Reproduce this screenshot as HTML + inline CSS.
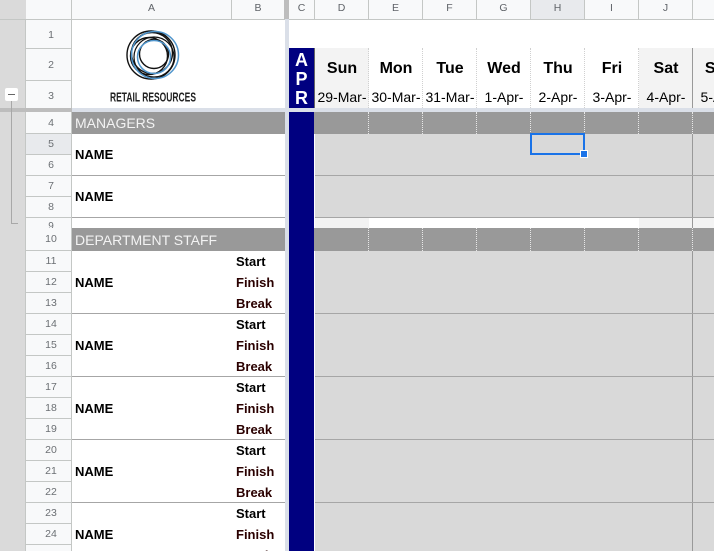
<!DOCTYPE html>
<html><head><meta charset="utf-8">
<style>
html,body{margin:0;padding:0;background:#fff}
#p{position:relative;width:714px;height:551px;overflow:hidden;background:#fff;font-family:"Liberation Sans",Arial,sans-serif}
#p div{position:absolute}
.r{left:26px;width:45px;background:#f8f9fa;border-bottom:1px solid #c4c7c5;text-align:center;font-size:10.5px;color:#6b6f73;box-sizing:border-box;display:flex;align-items:center;justify-content:center;padding-left:5px}
.c{top:0;height:19px;line-height:17px;background:#f8f9fa;border-right:1px solid #c4c7c5;box-sizing:border-box;text-align:center;font-size:10.5px;color:#5f6368}
.n{left:75px;font-size:13px;font-weight:bold;color:#000;line-height:16px}
.s{left:236px;font-size:13px;font-weight:bold;color:#000;line-height:16px}
.f{color:#2a0000}
.l{background:#a6a6a6;height:1px}
.d{width:54px;text-align:center;font-size:16px;font-weight:bold;color:#000;top:60px;line-height:18px}
.t{width:54px;text-align:center;font-size:14px;color:#000;top:88px;line-height:18px;white-space:nowrap;overflow:hidden}
.h{background:#999}
.ht{color:#f3f3f3;font-size:14px;left:75px;line-height:22px}
.g{background:#d9d9d9}
.v{width:0;border-left:1px dotted #d0d0d0}
.w{width:0;border-left:1px dotted #e8e8e8;top:112px;height:22px}
.w2{width:0;border-left:1px dotted #e8e8e8;top:228px;height:23px}
</style></head><body><div id="p">

<!-- grid background -->
<div class="g" style="left:315px;top:134px;width:399px;height:84px"></div>
<div class="g" style="left:315px;top:251px;width:399px;height:300px"></div>

<!-- row 9 strip -->
<div style="left:315px;top:218px;width:54px;height:10px;background:#f3f3f3"></div>
<div style="left:639px;top:218px;width:75px;height:10px;background:#f3f3f3"></div>

<!-- gutter -->
<div style="left:0;top:0;width:25px;height:551px;background:#dadada"></div>
<div style="left:25px;top:0;width:1px;height:551px;background:#c4c7c5"></div>
<div style="left:0;top:0;width:26px;height:19px;background:#dadada"></div>
<div style="left:71px;top:0;width:1px;height:551px;background:#c4c7c5"></div>

<!-- column headers -->
<div class="c" style="left:26px;width:46px"></div>
<div class="c" style="left:72px;width:160px">A</div>
<div class="c" style="left:232px;width:53px">B</div>
<div class="c" style="left:289px;width:26px">C</div>
<div class="c" style="left:315px;width:54px">D</div>
<div class="c" style="left:369px;width:54px">E</div>
<div class="c" style="left:423px;width:54px">F</div>
<div class="c" style="left:477px;width:54px">G</div>
<div class="c" style="left:531px;width:54px;background:#e8eaed">H</div>
<div class="c" style="left:585px;width:54px">I</div>
<div class="c" style="left:639px;width:54px">J</div>
<div class="c" style="left:693px;width:21px;border-right:0"></div>
<div style="left:0;top:19px;width:714px;height:1px;background:#c4c7c5"></div>

<!-- row headers -->
<div class="r" style="top:20px;height:29px;padding-top:2px">1</div>
<div class="r" style="top:49px;height:32px">2</div>
<div class="r" style="top:81px;height:27px;border-bottom:0;padding-top:2px">3</div>
<div class="r" style="top:112px;height:22px">4</div>
<div class="r" style="top:134px;height:21px;background:#e8eaed">5</div>
<div class="r" style="top:155px;height:21px">6</div>
<div class="r" style="top:176px;height:21px">7</div>
<div class="r" style="top:197px;height:21px">8</div>
<div class="r" style="top:218px;height:10px;overflow:hidden;align-items:flex-start;line-height:14px;font-size:10px;border-bottom:0"><span style="margin-top:2px">9</span></div>
<div class="r" style="top:228px;height:23px">10</div>
<div class="r" style="top:251px;height:21px">11</div>
<div class="r" style="top:272px;height:21px">12</div>
<div class="r" style="top:293px;height:21px">13</div>
<div class="r" style="top:314px;height:21px">14</div>
<div class="r" style="top:335px;height:21px">15</div>
<div class="r" style="top:356px;height:21px">16</div>
<div class="r" style="top:377px;height:21px">17</div>
<div class="r" style="top:398px;height:21px">18</div>
<div class="r" style="top:419px;height:21px">19</div>
<div class="r" style="top:440px;height:21px">20</div>
<div class="r" style="top:461px;height:21px">21</div>
<div class="r" style="top:482px;height:21px">22</div>
<div class="r" style="top:503px;height:21px">23</div>
<div class="r" style="top:524px;height:21px">24</div>
<div class="r" style="top:545px;height:6px;border-bottom:0"></div>

<!-- freeze bars -->
<div style="left:0;top:108px;width:72px;height:4px;background:#bdbdbd"></div>
<div style="left:72px;top:108px;width:642px;height:4px;background:#dadfe8"></div>
<div style="left:285px;top:19px;width:4px;height:532px;background:#dadfe8"></div>
<div style="left:284px;top:0;width:5px;height:19px;background:#bdbdbd"></div>

<!-- outline group -->
<div style="left:11px;top:100px;width:1px;height:123px;background:#a8a8a8"></div>
<div style="left:11px;top:223px;width:7px;height:1px;background:#a8a8a8"></div>
<div style="left:5px;top:88px;width:13px;height:13px;background:#fff;border-radius:2px"></div>
<div style="left:8px;top:94px;width:7px;height:1px;background:#666"></div>

<!-- logo -->
<svg style="position:absolute;left:110px;top:24px" width="86" height="84" viewBox="0 0 86 84">
<g fill="none">
<circle cx="41" cy="31" r="24" stroke="#111" stroke-width="1.4"/>
<circle cx="42" cy="29" r="20.5" stroke="#111" stroke-width="1.4"/>
<circle cx="39" cy="32" r="18.5" stroke="#111" stroke-width="1.4"/>
<circle cx="44" cy="33" r="20" stroke="#111" stroke-width="1.2"/>
<circle cx="44" cy="30" r="14.5" stroke="#111" stroke-width="1.4"/>
<circle cx="45" cy="31" r="23.5" stroke="#4f95cc" stroke-width="1.5"/>
<circle cx="44" cy="33" r="16.5" stroke="#4f95cc" stroke-width="1.5"/>
</g>
<text x="0" y="77.5" font-family="Liberation Sans Narrow,Liberation Sans,sans-serif" font-size="13" font-weight="bold" fill="#222" textLength="86" lengthAdjust="spacingAndGlyphs">RETAIL RESOURCES</text>
</svg>

<!-- Day headers -->
<div style="left:315px;top:48px;width:54px;height:60px;background:#f3f3f3"></div>
<div style="left:639px;top:48px;width:75px;height:60px;background:#f3f3f3"></div>
<div class="v" style="left:368px;top:48px;height:60px"></div>
<div class="v" style="left:422px;top:48px;height:60px"></div>
<div class="v" style="left:476px;top:48px;height:60px"></div>
<div class="v" style="left:530px;top:48px;height:60px"></div>
<div class="v" style="left:584px;top:48px;height:60px"></div>
<div class="v" style="left:638px;top:48px;height:60px"></div>
<div style="left:692px;top:48px;width:1px;height:60px;background:#999"></div>
<div style="left:314px;top:48px;width:1px;height:60px;background:#666"></div>

<div class="d" style="left:315px">Sun</div>
<div class="d" style="left:369px">Mon</div>
<div class="d" style="left:423px">Tue</div>
<div class="d" style="left:477px">Wed</div>
<div class="d" style="left:531px">Thu</div>
<div class="d" style="left:585px">Fri</div>
<div class="d" style="left:639px">Sat</div>
<div class="d" style="left:693px">Sun</div>
<div class="t" style="left:315px">29-Mar-</div>
<div class="t" style="left:369px">30-Mar-</div>
<div class="t" style="left:423px">31-Mar-</div>
<div class="t" style="left:477px">1-Apr-</div>
<div class="t" style="left:531px">2-Apr-</div>
<div class="t" style="left:585px">3-Apr-</div>
<div class="t" style="left:639px">4-Apr-</div>
<div class="t" style="left:693px">5-Apr-</div>

<!-- section headers -->
<div class="h" style="left:72px;top:112px;width:213px;height:22px"></div>
<div class="h" style="left:314px;top:112px;width:400px;height:22px"></div>
<div class="ht" style="top:112px">MANAGERS</div>
<div class="h" style="left:72px;top:228px;width:213px;height:23px"></div>
<div class="h" style="left:314px;top:228px;width:400px;height:23px"></div>
<div class="ht" style="top:229px">DEPARTMENT STAFF</div>

<div class="w" style="left:368px"></div><div class="w" style="left:422px"></div><div class="w" style="left:476px"></div><div class="w" style="left:530px"></div><div class="w" style="left:584px"></div><div class="w" style="left:638px"></div><div class="w" style="left:692px"></div>
<div class="w2" style="left:368px"></div><div class="w2" style="left:422px"></div><div class="w2" style="left:476px"></div><div class="w2" style="left:530px"></div><div class="w2" style="left:584px"></div><div class="w2" style="left:638px"></div><div class="w2" style="left:692px"></div>

<!-- vertical week line -->
<div style="left:692px;top:134px;width:1px;height:94px;background:#999"></div>
<div style="left:692px;top:251px;width:1px;height:300px;background:#999"></div>

<!-- horizontal lines -->
<div class="l" style="left:72px;top:175px;width:213px"></div><div class="l" style="left:315px;top:175px;width:399px"></div>
<div class="l" style="left:72px;top:217px;width:213px"></div><div class="l" style="left:315px;top:217px;width:399px"></div>
<div class="l" style="left:72px;top:313px;width:213px"></div><div class="l" style="left:315px;top:313px;width:399px"></div>
<div class="l" style="left:72px;top:376px;width:213px"></div><div class="l" style="left:315px;top:376px;width:399px"></div>
<div class="l" style="left:72px;top:439px;width:213px"></div><div class="l" style="left:315px;top:439px;width:399px"></div>
<div class="l" style="left:72px;top:502px;width:213px"></div><div class="l" style="left:315px;top:502px;width:399px"></div>

<!-- APR column -->
<div style="left:289px;top:48px;width:25px;height:60px;background:#000080"></div>
<div style="left:289px;top:112px;width:25px;height:439px;background:#000080"></div>
<div style="left:289px;top:51px;width:25px;text-align:center;color:#fff;font-size:18px;font-weight:bold;line-height:19px">A<br>P<br>R</div>

<!-- names -->
<div class="n" style="top:147px">NAME</div>
<div class="n" style="top:189px">NAME</div>
<div class="n" style="top:275px">NAME</div>
<div class="n" style="top:338px">NAME</div>
<div class="n" style="top:401px">NAME</div>
<div class="n" style="top:464px">NAME</div>
<div class="n" style="top:527px">NAME</div>

<div class="s" style="top:254px">Start</div><div class="s f" style="top:275px">Finish</div><div class="s f" style="top:296px">Break</div>
<div class="s" style="top:317px">Start</div><div class="s f" style="top:338px">Finish</div><div class="s f" style="top:359px">Break</div>
<div class="s" style="top:380px">Start</div><div class="s f" style="top:401px">Finish</div><div class="s f" style="top:422px">Break</div>
<div class="s" style="top:443px">Start</div><div class="s f" style="top:464px">Finish</div><div class="s f" style="top:485px">Break</div>
<div class="s" style="top:506px">Start</div><div class="s f" style="top:527px">Finish</div><div class="s f" style="top:548px">Break</div>

<!-- selection -->
<div style="left:530px;top:133px;width:51px;height:18px;border:2px solid #1a73e8"></div>
<div style="left:580px;top:150px;width:8px;height:8px;background:#1a73e8;border:1px solid #fff;box-sizing:border-box"></div>

</div></body></html>
